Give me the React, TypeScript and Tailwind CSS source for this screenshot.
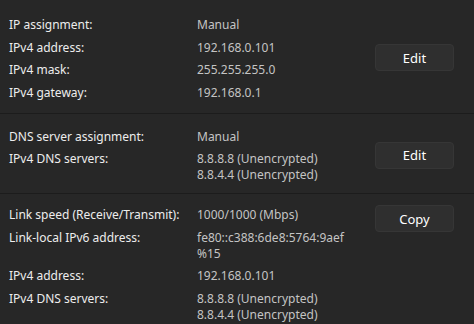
import React from 'react';

type Row = { label: string; value: string[] };

const sections: { rows: Row[]; button: string; pad: string; align: string }[] = [
  {
    rows: [
      { label: 'IP assignment:', value: ['Manual'] },
      { label: 'IPv4 address:', value: ['192.168.0.101'] },
      { label: 'IPv4 mask:', value: ['255.255.255.0'] },
      { label: 'IPv4 gateway:', value: ['192.168.0.1'] },
    ],
    button: 'Edit',
    pad: 'pt-[17px] pb-[12px]',
    align: 'self-center mt-[-2px]',
  },
  {
    rows: [
      { label: 'DNS server assignment:', value: ['Manual'] },
      { label: 'IPv4 DNS servers:', value: ['8.8.8.8 (Unencrypted)', '8.8.4.4 (Unencrypted)'] },
    ],
    button: 'Edit',
    pad: 'pt-[15px] pb-[10px]',
    align: 'self-center mt-[-1px]',
  },
  {
    rows: [
      { label: 'Link speed (Receive/Transmit):', value: ['1000/1000 (Mbps)'] },
      { label: 'Link-local IPv6 address:', value: ['fe80::c388:6de8:5764:9aef', '%15'] },
      { label: 'IPv4 address:', value: ['192.168.0.101'] },
      { label: 'IPv4 DNS servers:', value: ['8.8.8.8 (Unencrypted)', '8.8.4.4 (Unencrypted)'] },
    ],
    button: 'Copy',
    pad: 'pt-[13px] pb-[11px]',
    align: 'self-start mt-[-2px]',
  },
];

export default function App() {
  return (
    <div
      className="w-[474px] h-[324px] overflow-hidden bg-[#272727] text-[12px] leading-[16px]"
      style={{ fontFamily: '"Noto Sans", "Open Sans", sans-serif' }}
    >
      {sections.map((s, i) => (
        <div
          key={i}
          className={`flex pl-[9px] pr-[20px] ${s.pad} ${i > 0 ? 'border-t border-[#1c1c1c]' : ''}`}
        >
          <div className="flex flex-1 flex-col gap-[6.5px]">
            {s.rows.map((r) => (
              <div key={r.label} className="flex">
                <div className="w-[188px] shrink-0 text-[#ededed]">{r.label}</div>
                <div className="text-[#c4c4c4]">
                  {r.value.map((v) => (
                    <div key={v}>{v}</div>
                  ))}
                </div>
              </div>
            ))}
          </div>
          <button
            className={`${s.align} w-[79px] h-[27px] rounded-[4px] bg-[#2f2f2f] border border-[#363636] text-white text-[13px]`}
          >
            {s.button}
          </button>
        </div>
      ))}
    </div>
  );
}
